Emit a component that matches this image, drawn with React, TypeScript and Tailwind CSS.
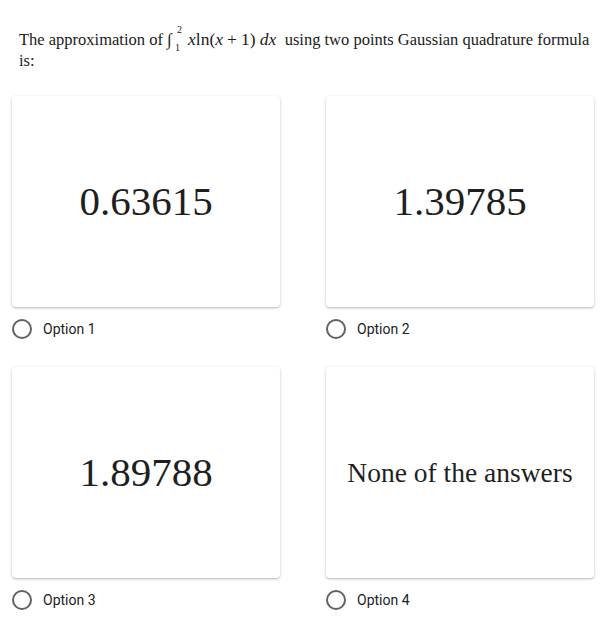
const options = [
  { value: "0.63615", label: "Option 1", big: true },
  { value: "1.39785", label: "Option 2", big: true },
  { value: "1.89788", label: "Option 3", big: true },
  { value: "None of the answers", label: "Option 4", big: false },
];

function Choice({ value, label, big }: { value: string; label: string; big: boolean }) {
  return (
    <div className="flex flex-col">
      <div className="h-[211px] bg-white rounded-[4px] shadow-[0px_1px_3px_0px_rgba(60,64,67,0.3),0px_1px_1px_0px_rgba(60,64,67,0.1)] flex items-center justify-center">
        <p
          className={`font-['Liberation_Serif',serif] text-[#1f1f1f] leading-none ${
            big ? "text-[41px]" : "text-[27.5px]"
          }`}
        >
          {value}
        </p>
      </div>
      <div className="flex items-center h-[60px] pb-[16px]">
        <div className="size-[20px] rounded-full border-2 border-[#5f6368] shrink-0" />
        <span className="ml-[11px] font-['Roboto',sans-serif] text-[14px] text-[#202124]">{label}</span>
      </div>
    </div>
  );
}

export default function App() {
  return (
    <div className="w-[611px] h-[630px] bg-white overflow-hidden">
      {/* Question */}
      <div className="pt-[29px] pl-[19px] pr-[12px] font-['Liberation_Serif',serif] text-[16.5px] leading-[21px] text-[#1a1a1a]">
        The approximation of{" "}
        <span className="inline-block leading-none">
          <span className="relative inline-block text-[17px] italic w-[21px]">
            ∫
            <sup className="absolute left-[10px] top-[-6px] text-[10px] not-italic leading-none">2</sup>
            <sub className="absolute left-[8px] bottom-[-5px] text-[10px] not-italic leading-none">1</sub>
          </span>
          <span className="text-[17.5px]">
            <i>x</i>ln(<i>x</i>
            <span className="mx-[4px]">+</span>1) <i>dx</i>
          </span>
        </span>
        &nbsp; using two points Gaussian quadrature formula is:
      </div>

      {/* Answers */}
      <div className="grid grid-cols-[268px_268px] gap-x-[46px] pl-[12px] pt-[25px]">
        {options.map((o) => (
          <Choice key={o.label} value={o.value} label={o.label} big={o.big} />
        ))}
      </div>
    </div>
  );
}
